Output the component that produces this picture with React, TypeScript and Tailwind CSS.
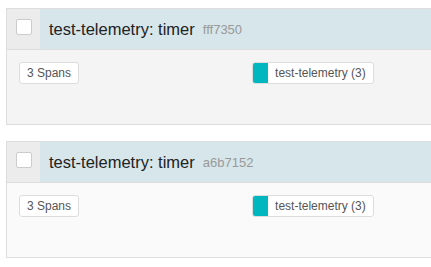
import React from 'react';

type Trace = { name: string; id: string; spans: number; service: string; bodyBg: string };

const traces: Trace[] = [
  { name: 'test-telemetry: timer', id: 'fff7350', spans: 3, service: 'test-telemetry (3)', bodyBg: 'bg-[#f4f4f4]' },
  { name: 'test-telemetry: timer', id: 'a6b7152', spans: 3, service: 'test-telemetry (3)', bodyBg: 'bg-[#fafafa]' },
];

function TraceCard({ t }: { t: Trace }) {
  return (
    <div className="border border-[#dddddd] border-r-0 w-[440px]">
      <div className="flex h-[41px] border-b border-[#dddddd]">
        <div className="w-[33px] bg-[#ececec] flex items-start justify-center pt-[10px]">
          <div className="w-4 h-4 bg-white border border-[#cccccc] rounded-[2px]" />
        </div>
        <div className="flex-1 bg-[#d6e6ea] flex items-center pl-[9px]">
          <span className="text-[16.5px] text-[#222]">{t.name}</span>
          <span className="ml-[8px] text-[13px] text-[#999] mt-[2px]">{t.id}</span>
        </div>
      </div>
      <div className={`${t.bodyBg} h-[74px] flex items-start pt-[12px] pl-[12px]`}>
        <div className="h-[22px] px-[7px] flex items-center bg-white border border-[#dddddd] rounded-[3px] text-[12px] text-[#555]">
          {t.spans} Spans
        </div>
        <div className="ml-[173px] h-[22px] flex items-center bg-white border border-[#dddddd] rounded-[3px] overflow-hidden text-[12px] text-[#555]">
          <div className="w-[15px] h-full bg-[#00b7c0]" />
          <span className="pl-[7px] pr-[7px]">{t.service}</span>
        </div>
      </div>
    </div>
  );
}

export default function App() {
  return (
    <div className="w-[431px] h-[267px] bg-white overflow-hidden pt-[8px] pl-[6px] font-['Liberation_Sans',Arial,sans-serif]">
      <div className="flex flex-col gap-4">
        {traces.map((t) => (
          <TraceCard key={t.id} t={t} />
        ))}
      </div>
    </div>
  );
}
